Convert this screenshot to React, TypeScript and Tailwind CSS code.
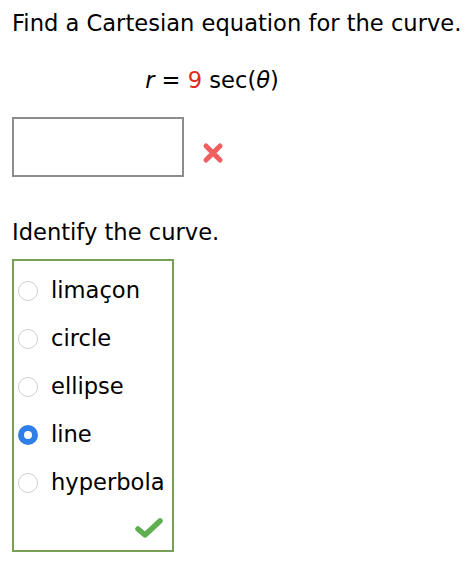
import React from "react";

const options = ["limaçon", "circle", "ellipse", "line", "hyperbola"];

function Radio({ checked }: { checked: boolean }) {
  if (checked) {
    return (
      <span className="flex h-[20px] w-[20px] items-center justify-center rounded-full bg-[#2f7fe6]">
        <span className="h-[8px] w-[8px] rounded-full bg-white" />
      </span>
    );
  }
  return <span className="h-[20px] w-[20px] rounded-full border border-[#cfcfcf] bg-white" />;
}

export default function App() {
  const selected = "line";

  return (
    <div
      className="min-h-[579px] bg-white text-[22.6px] text-black"
      style={{ fontFamily: '"DejaVu Sans", Verdana, sans-serif' }}
    >
      <div className="px-[12px] pt-[7px]">
        <p className="leading-[32px]">Find a Cartesian equation for the curve.</p>

        <div className="mt-[25px] flex justify-center pr-[50px] leading-[32px]">
          <span>
            <i>r</i> = <span className="text-[#e0281e]">9</span> sec(<i>θ</i>)
          </span>
        </div>

        <div className="mt-[21px] flex items-center">
          <div className="h-[60px] w-[172px] border-2 border-[#8c8c8c]" />
          <svg className="ml-[18px] mt-[12px]" width="22" height="22" viewBox="0 0 22 22">
            <path
              d="M4 4 L18 18 M18 4 L4 18"
              stroke="#ef5f5f"
              strokeWidth="5"
              strokeLinecap="round"
            />
          </svg>
        </div>

        <p className="mt-[39px] leading-[32px]">Identify the curve.</p>

        <div className="mt-[11px] flex w-[162px] flex-col border-2 border-[#77a055] pb-[11px] pt-[6px]">
          {options.map((o) => (
            <label key={o} className="flex h-[48px] items-center gap-[13px] pl-[4px]">
              <Radio checked={o === selected} />
              <span>{o}</span>
            </label>
          ))}
          <div className="flex justify-end pr-[9px] pt-[10px]">
            <svg width="28" height="22" viewBox="0 0 28 22">
              <path
                d="M3 12 L10 18 L25 4"
                fill="none"
                stroke="#5fae4f"
                strokeWidth="5.5"
                strokeLinecap="round"
                strokeLinejoin="round"
              />
            </svg>
          </div>
        </div>
      </div>
    </div>
  );
}
